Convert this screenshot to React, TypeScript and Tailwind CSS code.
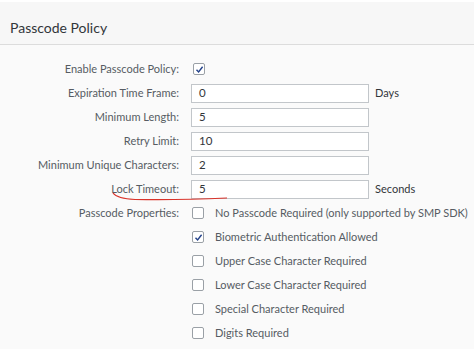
import React from "react"

const font = { fontFamily: 'Lato, "Liberation Sans", Arial, sans-serif' }

function Check({ checked }: { checked?: boolean }) {
  return (
    <span className="flex h-[12px] w-[12px] items-center justify-center rounded-[2px] border border-[#9aa0a6] bg-white">
      {checked && (
        <svg width="9" height="9" viewBox="0 0 9 9">
          <path d="M1.5 4.8 L3.6 7 L7.6 1.8" fill="none" stroke="#24428a" strokeWidth="1.4" />
        </svg>
      )}
    </span>
  )
}

function Label({ children }: { children?: React.ReactNode }) {
  return (
    <div className="w-[179px] shrink-0 whitespace-nowrap text-right text-[11px] text-[#565c63]">{children}</div>
  )
}

function Field({ label, value, unit }: { label: string; value: string; unit?: string }) {
  return (
    <div className="flex h-[24px] items-center">
      <Label>{label}</Label>
      <div className="ml-[12px] flex h-[19px] w-[178px] shrink-0 items-center border border-[#c2c6ca] bg-white pl-[7px] text-[11.5px] text-[#32363a]">
        {value}
      </div>
      {unit && <div className="ml-[6px] text-[11px] text-[#32363a]">{unit}</div>}
    </div>
  )
}

function Option({ label, checked, title }: { label: string; checked?: boolean; title?: string }) {
  return (
    <div className="flex h-[24px] items-center">
      <Label>{title}</Label>
      <div className="ml-[13px] shrink-0">
        <Check checked={checked} />
      </div>
      <div className="ml-[11px] whitespace-nowrap text-[11px] text-[#565c63]">{label}</div>
    </div>
  )
}

export default function App() {
  return (
    <div className="h-[349px] w-[474px] overflow-hidden bg-[#fafafa]" style={font}>
      <div className="border-t-2 border-b border-t-white border-b-[#dcdcdc] bg-[#f7f7f7] pl-[10px] pt-[18px] pb-[8px] text-[14px] leading-[16px] text-[#32363a]">
        Passcode Policy
      </div>
      <div className="relative pt-[12px]">
        <div className="flex h-[24px] items-center">
          <Label>Enable Passcode Policy:</Label>
          <div className="ml-[14px]">
            <Check checked />
          </div>
        </div>
        <Field label="Expiration Time Frame:" value="0" unit="Days" />
        <Field label="Minimum Length:" value="5" />
        <Field label="Retry Limit:" value="10" />
        <Field label="Minimum Unique Characters:" value="2" />
        <Field label="Lock Timeout:" value="5" unit="Seconds" />
        <Option title="Passcode Properties:" label="No Passcode Required (only supported by SMP SDK)" />
        <Option label="Biometric Authentication Allowed" checked />
        <Option label="Upper Case Character Required" />
        <Option label="Lower Case Character Required" />
        <Option label="Special Character Required" />
        <Option label="Digits Required" />
        <svg className="pointer-events-none absolute left-0 top-0" width="474" height="300">
          <path
            d="M113 148 C116 152 122 154 135 154.5 C160 155 195 154.5 227 153"
            fill="none"
            stroke="#d9342b"
            strokeWidth="1.2"
          />
        </svg>
      </div>
    </div>
  )
}
